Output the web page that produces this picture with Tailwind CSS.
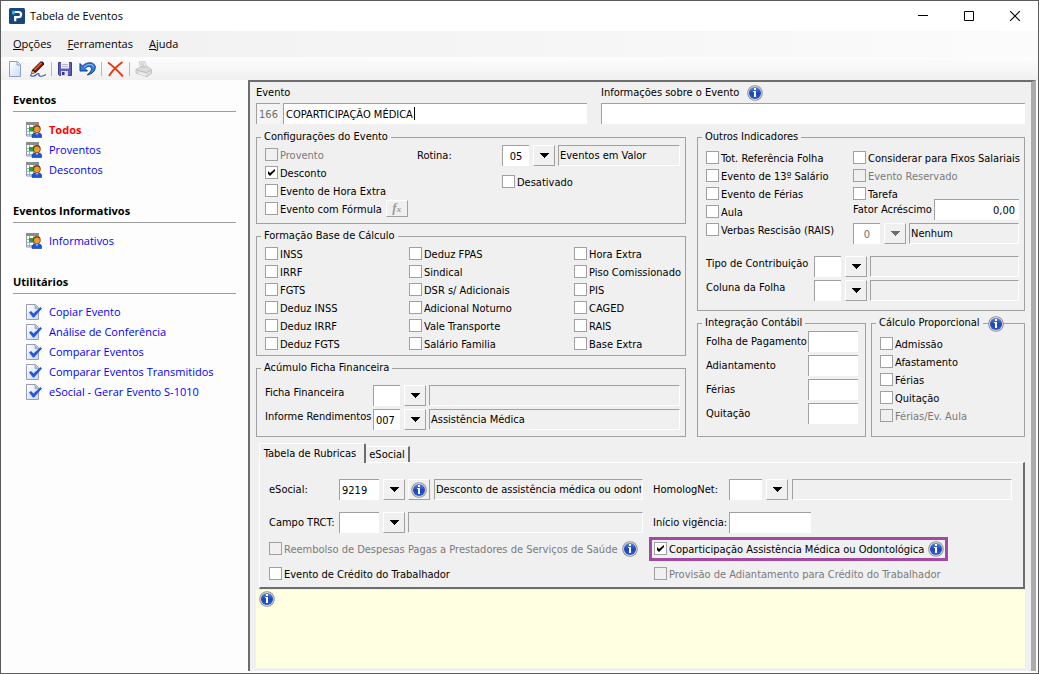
<!DOCTYPE html>
<html lang="pt-BR">
<head>
  <meta charset="UTF-8">
  <meta name="viewport" content="width=device-width, initial-scale=1.0">
  <title>Tabela de Eventos</title>
  <script src="https://cdn.jsdelivr.net/npm/@tailwindcss/browser@4"></script>
</head>
<body class="bg-[#fdfdfd] text-black">

  <!-- Shared icons -->
  <svg class="absolute w-0 h-0" aria-hidden="true">
    <defs>
      <linearGradient id="infoBlue" x1="0" y1="0" x2="0" y2="1">
        <stop offset="0" stop-color="#5f86e6"/>
        <stop offset=".5" stop-color="#1c45b8"/>
        <stop offset="1" stop-color="#2a5cd6"/>
      </linearGradient>
      <linearGradient id="page" x1="0" y1="0" x2="1" y2="1">
        <stop offset="0" stop-color="#ffffff"/>
        <stop offset="1" stop-color="#c9dcf5"/>
      </linearGradient>
    </defs>
    <symbol id="info" viewBox="0 0 16 16">
      <circle cx="8" cy="8" r="7.8" fill="#8c8c8c"/>
      <circle cx="8" cy="8" r="6.9" fill="#d4d4d4"/>
      <circle cx="8" cy="8" r="6" fill="url(#infoBlue)"/>
      <path d="M7 3h2v2H7zM6 6h3v6H7V7H6z" fill="#fff"/>
    </symbol>
    <symbol id="arrow" viewBox="0 0 9 5">
      <path d="M0 0h9v1H8v1H7v1H6v1H5v1H4V4H3V3H2V2H1V1H0z" fill="currentColor"/>
    </symbol>
    <symbol id="tick" viewBox="0 0 7 7">
      <path d="M0 2v3l2 2 5-5V0L2 4z" fill="#000"/>
    </symbol>
    <symbol id="sheet-user" viewBox="0 0 16 16">
      <path d="M.5 1h12v13H.5z" fill="#fff" stroke="#8e9aa5"/>
      <path d="M0 0h13v3H0z" fill="#8c8c8c"/>
      <path d="M1 6.5h12M1 9.5h12M1 12.5h6M3.5 3v11M7.5 3v11" stroke="#8fb3da"/>
      <path d="M3 5h4v4H3z" fill="#27a527"/>
      <path d="M6 15.5c-.5-3 1-4.5 3-4.5h4c2 0 3 1.500 2.700 4.500z" fill="#1d55d8" stroke="#12368f" stroke-width=".6"/>
      <path d="M9.500 11l1.500 2.500 1.500-2.500z" fill="#8fb8ff"/>
      <circle cx="10.800" cy="7" r="3.900" fill="#7a3d0b"/>
      <circle cx="10.900" cy="7.500" r="2.900" fill="#ee9a35"/>
    </symbol>
    <symbol id="sheet-check" viewBox="0 0 16 16">
      <path d="M.5.5h9l3 3v12H.5z" fill="url(#page)" stroke="#9c9cb4"/>
      <path d="M9 1v3.500h3.500" fill="#b5b9c6" stroke="#9c9cb4" stroke-width=".7"/>
      <path d="M3 8.500l2-1.500 2.500 2.500L14.500 3 16 4.500 8 13.500H7z" fill="#2457e0"/>
    </symbol>
  </svg>

  <div class="min-h-screen flex flex-col border border-[#5c5c5e] text-[11px] leading-4 whitespace-nowrap font-['Open_Sans','Noto_Sans',sans-serif]">

    <!-- Title bar -->
    <header class="h-[30px] flex items-center bg-white pl-2">
      <svg class="w-4 h-4" viewBox="0 0 16 16">
        <rect width="16" height="16" rx="1.500" fill="#17467f"/>
        <path d="M5 4h4.500a2.500 2.500 0 0 1 0 5.200H6.200v4" fill="none" stroke="#fff" stroke-width="2.200"/>
        <path d="M3 2.800h3l-.5 4L3 6z" fill="#35b6e8"/>
      </svg>
      <h1 class="ml-[5px]">Tabela de Eventos</h1>
      <div class="ml-auto flex items-center">
        <button aria-label="Minimizar" class="w-[46px] h-[29px] flex items-center justify-center">
          <svg class="w-[10px] h-[10px]" viewBox="0 0 10 10"><path d="M0 4.500h10" stroke="#000"/></svg>
        </button>
        <button aria-label="Maximizar" class="w-[46px] h-[29px] flex items-center justify-center">
          <svg class="w-[10px] h-[10px]" viewBox="0 0 10 10"><path d="M.5.5h9v9h-9z" fill="none" stroke="#000"/></svg>
        </button>
        <button aria-label="Fechar" class="w-[46px] h-[29px] flex items-center justify-center">
          <svg class="w-[10px] h-[10px]" viewBox="0 0 10 10"><path d="M0 0l10 10M10 0L0 10" stroke="#000" stroke-width="1.100"/></svg>
        </button>
      </div>
    </header>

    <!-- Menu -->
    <nav class="h-[26px] flex items-center gap-4 pl-3 bg-linear-to-r from-[#f0f0f0] to-[#fbfbfb]">
      <button><u>O</u>pções</button>
      <button><u>F</u>erramentas</button>
      <button><u>A</u>juda</button>
    </nav>

    <!-- Toolbar -->
    <div class="h-[23px] flex items-center pl-[6px] bg-linear-to-b from-[#fdfdfd] to-[#f0f0f0]">
      <button aria-label="Novo">
        <svg class="w-4 h-4" viewBox="0 0 16 16">
          <path d="M2.500.5h8l3 3v12h-11z" fill="url(#page)" stroke="#8d9fc0"/>
          <path d="M10 .5v3.500h3.500" fill="#e8effa" stroke="#8d9fc0"/>
        </svg>
      </button>
      <button aria-label="Editar" class="ml-[7px]">
        <svg class="w-4 h-4" viewBox="0 0 16 16">
          <path d="M2 9l8.500-8.500h2L14 2v1.500L5.500 12 1 13.500z" fill="#1b0f0c"/>
          <path d="M3.500 8.500L11 1l1.500 1.500-7.500 7.500z" fill="#e2502c"/>
          <path d="M5 10l7.500-7.500.7.700-7.200 7.200z" fill="#8c1c10"/>
          <path d="M2.700 9.500l-1.200 3.500 3.500-1.200z" fill="#f0b368"/>
          <path d="M0 13.500c1 2.500 4.500 2 6 .5s3.500-2 3 0 4 1.500 7-.5" fill="none" stroke="#2d5fa8" stroke-width="1.200"/>
        </svg>
      </button>
      <span class="ml-[5px] w-px h-[14px] bg-[#b9b9b9]"></span>
      <button aria-label="Salvar" class="ml-[5px]">
        <svg class="w-4 h-4" viewBox="0 0 16 16">
          <path d="M1.500 1.500h13v13h-12l-1-1z" fill="#5a5cc4" stroke="#3c3d96"/>
          <path d="M4 1h8v6.500H4z" fill="#f3f3f7"/>
          <path d="M5 3.500h6M5 5.500h6" stroke="#b6b6c6"/>
          <path d="M4 10h7v5H4z" fill="#dfe0ea"/>
          <path d="M5 11h2.500v3H5z" fill="#33347f"/>
        </svg>
      </button>
      <button aria-label="Desfazer" class="ml-[6px]">
        <svg class="w-[17px] h-4" viewBox="0 0 17 16">
          <path d="M1 2.500v7.500h7.500L6 7.500C8 5 11.500 4.800 12.300 7c.7 2-1 4-4 7 5-1.200 8-4.200 8-7.700 0-5-7.800-6.500-12.800-1.300z" fill="#2f7fe0" stroke="#103f94"/>
          <path d="M5 6.300c3.500-3.500 8.500-3.800 9.700-.5" fill="none" stroke="#8cc4ff" stroke-width="1"/>
        </svg>
      </button>
      <span class="ml-[5px] w-px h-[14px] bg-[#b9b9b9]"></span>
      <button aria-label="Excluir" class="ml-[5px]">
        <svg class="w-[17px] h-4" viewBox="0 0 17 16">
          <path d="M1 1.500C6 5 11 10 16 15.500M15.500 1C10 5 5 10 2 15" fill="none" stroke="#e8380d" stroke-width="1.900"/>
        </svg>
      </button>
      <span class="ml-[5px] w-px h-[14px] bg-[#b9b9b9]"></span>
      <button aria-label="Imprimir" disabled class="ml-[5px]">
        <svg class="w-[17px] h-4" viewBox="0 0 17 16">
          <path d="M4 1l6-.5 2 6.500H6z" fill="#ececec" stroke="#cecece"/>
          <path d="M1 8.500l4-2.500h8l3.500 2.500v4L12 15.500 1 12z" fill="#dcdcdc" stroke="#c2c2c2"/>
          <path d="M1.500 9l10 2.500 4.500-2.500M6 3h3M6.500 5h3" fill="none" stroke="#bcbcbc"/>
          <path d="M4 12l7 2" stroke="#f5f5f5" stroke-width="1.500"/>
        </svg>
      </button>
    </div>

    <div class="flex-1 flex">

      <!-- Sidebar -->
      <aside class="w-[247px] shrink-0 pl-3 pr-[12px] pt-3 flex flex-col gap-[23px]">
        <section>
          <h2 class="font-bold pb-[3px] border-b border-[#9c9c9c]">Eventos</h2>
          <ul data-icon="sheet-user" data-links="Todos|Proventos|Descontos" class="mt-2"></ul>
        </section>
        <section>
          <h2 class="font-bold pb-[3px] border-b border-[#9c9c9c]">Eventos Informativos</h2>
          <ul data-icon="sheet-user" data-links="Informativos" class="mt-2"></ul>
        </section>
        <section>
          <h2 class="font-bold pb-[3px] border-b border-[#9c9c9c]">Utilitários</h2>
          <ul data-icon="sheet-check" data-links="Copiar Evento|Análise de Conferência|Comparar Eventos|Comparar Eventos Transmitidos|eSocial - Gerar Evento S-1010" class="mt-2"></ul>
        </section>
      </aside>

      <!-- Form -->
      <main class="flex-1 min-w-0 mr-[2px] mb-[2px] flex flex-col bg-[#f0f0f0] border-l-2 border-t-2 border-[#6d6d6d] border-r-[5px] border-r-[#ababab] pl-[6px] pr-[6px] pb-[3px] font-['DejaVu_Sans_Condensed','Noto_Sans',sans-serif]">

        <div class="flex gap-[14px]">
          <div class="w-[331px] shrink-0">
            <label for="evento" class="h-[21px] flex items-center">Evento</label>
            <div class="flex gap-[3px]">
              <input aria-label="Código do evento" value="166" disabled class="w-[24px] h-[21px] text-center text-[#6d6d6d] bg-[#f5f5f5] border-l border-t border-[#a0a0a0]">
              <span class="flex-1 h-[21px] flex relative">
                <input id="evento" value="COPARTICIPAÇÃO MÉDICA" class="w-full h-[21px] pl-[2px] bg-white border-l border-t border-[#a0a0a0]">
                <span class="absolute left-[131px] top-[4px] w-px h-[13px] bg-black"></span>
              </span>
            </div>
          </div>
          <div class="flex-1">
            <div class="h-[21px] flex items-center gap-2">
              <label for="infoEvento">Informações sobre o Evento</label>
              <svg class="w-4 h-4"><use href="#info"/></svg>
            </div>
            <input id="infoEvento" class="w-full h-[21px] bg-white border-l border-t border-[#a0a0a0]">
          </div>
        </div>

        <div class="mt-[5px] grid grid-cols-[minmax(0,430fr)_minmax(0,328fr)] gap-[11px]">
          <div class="flex flex-col gap-1">

            <fieldset class="min-w-0 border border-[#a0a0a0] pl-2 pr-[5px] pb-[5px] flex">
              <legend class="-ml-1 px-[3px]">Configurações do Evento</legend>
              <div class="w-[152px] pt-px">
                <div data-checks="-Provento|+Desconto|Evento de Hora Extra"></div>
                <div class="flex gap-1">
                  <div data-checks="Evento com Fórmula"></div>
                  <button aria-label="Editar fórmula" disabled class="w-[22px] h-[17px] text-[13px] leading-3 italic font-bold text-[#9a9a9a] border border-white border-r-[#a0a0a0] border-b-[#a0a0a0] font-['Liberation_Serif',serif]">f<span class="text-[9px]">x</span></button>
                </div>
              </div>
              <div class="flex-1 min-w-0">
                <div class="flex">
                  <label for="rotina" class="w-[85px] h-[21px] flex items-center">Rotina:</label>
                  <input id="rotina" value="05" class="w-[27px] h-[21px] text-center bg-white border-l border-t border-[#a0a0a0]">
                  <button aria-label="Escolher rotina" class="ml-1 w-[22px] h-[21px] flex items-center justify-center border border-white border-r-[#a0a0a0] border-b-[#a0a0a0]"><svg class="w-[9px] h-[5px]"><use href="#arrow"/></svg></button>
                  <input aria-label="Descrição da rotina" readonly value="Eventos em Valor" class="ml-[3px] flex-1 min-w-0 h-[21px] pl-px border border-[#a0a0a0] border-r-white border-b-white">
                </div>
                <div data-checks="Desativado" class="ml-[85px] mt-[7px]"></div>
              </div>
            </fieldset>

            <fieldset class="min-w-0 border border-[#a0a0a0] pl-2 pt-px pb-[2px] grid grid-cols-[144px_165px_1fr]">
              <legend class="-ml-1 px-[3px]">Formação Base de Cálculo</legend>
              <div data-checks="INSS|IRRF|FGTS|Deduz INSS|Deduz IRRF|Deduz FGTS"></div>
              <div data-checks="Deduz FPAS|Sindical|DSR s/ Adicionais|Adicional Noturno|Vale Transporte|Salário Familia"></div>
              <div data-checks="Hora Extra|Piso Comissionado|PIS|CAGED|RAIS|Base Extra"></div>
            </fieldset>

            <fieldset class="min-w-0 border border-[#a0a0a0] pl-2 pr-[5px] pt-[9px] pb-[6px]">
              <legend class="-ml-1 px-[3px]">Acúmulo Ficha Financeira</legend>
              <div class="flex">
                <label for="ficha" class="w-[108px]">Ficha Financeira</label>
                <input id="ficha" class="w-[27px] h-[21px] bg-white border-l border-t border-[#a0a0a0]">
                <button aria-label="Escolher ficha" class="ml-1 w-[22px] h-[21px] flex items-center justify-center border border-white border-r-[#a0a0a0] border-b-[#a0a0a0]"><svg class="w-[9px] h-[5px]"><use href="#arrow"/></svg></button>
                <input aria-label="Descrição da ficha" readonly class="ml-[3px] flex-1 min-w-0 h-[21px] border border-[#a0a0a0] border-r-white border-b-white">
              </div>
              <div class="mt-[3px] flex">
                <label for="informe" class="w-[108px]">Informe Rendimentos</label>
                <input id="informe" value="007" class="w-[27px] h-[21px] pl-[2px] bg-white border-l border-t border-[#a0a0a0]">
                <button aria-label="Escolher informe" class="ml-1 w-[22px] h-[21px] flex items-center justify-center border border-white border-r-[#a0a0a0] border-b-[#a0a0a0]"><svg class="w-[9px] h-[5px]"><use href="#arrow"/></svg></button>
                <input aria-label="Descrição do informe" readonly value="Assistência Médica" class="ml-[3px] flex-1 min-w-0 h-[21px] pl-px border border-[#a0a0a0] border-r-white border-b-white">
              </div>
            </fieldset>
          </div>

          <div class="flex flex-col gap-1">
            <fieldset class="min-w-0 border border-[#a0a0a0] pl-2 pr-[5px] pt-1 pb-[9px]">
              <legend class="-ml-1 px-[3px]">Outros Indicadores</legend>
              <div class="grid grid-cols-[147px_minmax(0,1fr)]">
                <div data-checks="Tot. Referência Folha|Evento de 13º Salário|Evento de Férias|Aula|Verbas Rescisão (RAIS)"></div>
                <div>
                  <div data-checks="Considerar para Fixos Salariais|-Evento Reservado|Tarefa"></div>
                  <div class="-mt-1 flex items-center justify-between">
                    <label for="fator">Fator Acréscimo</label>
                    <input id="fator" value="0,00" class="w-[85px] h-[21px] pr-1 text-right bg-white border-l border-t border-[#a0a0a0]">
                  </div>
                  <div class="mt-[3px] flex">
                    <input aria-label="Código do fator" value="0" disabled class="w-[27px] h-[21px] text-center text-[#6d6d6d] bg-white border-l border-t border-[#a0a0a0]">
                    <button aria-label="Escolher fator" disabled class="ml-1 w-[22px] h-[21px] flex items-center justify-center text-[#6d6d6d] border border-white border-r-[#a0a0a0] border-b-[#a0a0a0]"><svg class="w-[9px] h-[5px]"><use href="#arrow"/></svg></button>
                    <input aria-label="Descrição do fator" readonly value="Nenhum" class="ml-[3px] flex-1 min-w-0 h-[21px] pl-px border border-[#a0a0a0] border-r-white border-b-white">
                  </div>
                </div>
              </div>
              <div class="mt-3 flex">
                <label for="tipo" class="w-[108px]">Tipo de Contribuição</label>
                <input id="tipo" class="w-[27px] h-[21px] bg-white border-l border-t border-[#a0a0a0]">
                <button aria-label="Escolher tipo" class="ml-1 w-[22px] h-[21px] flex items-center justify-center border border-white border-r-[#a0a0a0] border-b-[#a0a0a0]"><svg class="w-[9px] h-[5px]"><use href="#arrow"/></svg></button>
                <input aria-label="Descrição do tipo" readonly class="ml-[3px] flex-1 min-w-0 h-[21px] border border-[#a0a0a0] border-r-white border-b-white">
              </div>
              <div class="mt-[3px] flex">
                <label for="coluna" class="w-[108px]">Coluna da Folha</label>
                <input id="coluna" class="w-[27px] h-[21px] bg-white border-l border-t border-[#a0a0a0]">
                <button aria-label="Escolher coluna" class="ml-1 w-[22px] h-[21px] flex items-center justify-center border border-white border-r-[#a0a0a0] border-b-[#a0a0a0]"><svg class="w-[9px] h-[5px]"><use href="#arrow"/></svg></button>
                <input aria-label="Descrição da coluna" readonly class="ml-[3px] flex-1 min-w-0 h-[21px] border border-[#a0a0a0] border-r-white border-b-white">
              </div>
            </fieldset>

            <div class="flex-1 grid grid-cols-[minmax(0,169fr)_minmax(0,154fr)] gap-[5px]">
              <fieldset class="min-w-0 border border-[#a0a0a0] pl-2 pr-[7px] flex flex-col gap-[3px]">
                <legend class="-ml-1 px-[3px]">Integração Contábil</legend>
                <div class="flex items-center justify-between">
                  <label for="folha">Folha de Pagamento</label>
                  <input id="folha" class="w-[50px] h-[21px] bg-white border-l border-t border-[#a0a0a0]">
                </div>
                <div class="flex items-center justify-between">
                  <label for="adiantamento">Adiantamento</label>
                  <input id="adiantamento" class="w-[50px] h-[21px] bg-white border-l border-t border-[#a0a0a0]">
                </div>
                <div class="flex items-center justify-between">
                  <label for="ferias">Férias</label>
                  <input id="ferias" class="w-[50px] h-[21px] bg-white border-l border-t border-[#a0a0a0]">
                </div>
                <div class="flex items-center justify-between">
                  <label for="quitacao">Quitação</label>
                  <input id="quitacao" class="w-[50px] h-[21px] bg-white border-l border-t border-[#a0a0a0]">
                </div>
              </fieldset>
              <div class="relative flex">
                <fieldset class="flex-1 min-w-0 border border-[#a0a0a0] pl-2 pt-1">
                  <legend class="-ml-1 px-[3px]">Cálculo Proporcional</legend>
                  <div data-checks="Admissão|Afastamento|Férias|Quitação|-Férias/Ev. Aula"></div>
                </fieldset>
                <svg class="absolute right-[21px] top-px w-4 h-4"><use href="#info"/></svg>
              </div>
            </div>
          </div>
        </div>

        <!-- Tabs -->
        <div class="mt-[6px] ml-[3px]">
          <div role="tablist" class="h-[19px] flex items-end">
            <button role="tab" aria-selected="true" class="relative -mb-px w-[107px] h-[20px] pr-1 border-l border-t border-white border-r-2 border-r-[#6d6d6d] rounded-t-[2px] bg-[#f0f0f0]">Tabela de Rubricas</button>
            <button role="tab" aria-selected="false" class="w-[44px] h-[16px] border-t border-white border-r-2 border-r-[#6d6d6d]">eSocial</button>
          </div>
          <div role="tabpanel" class="border-l border-t border-white border-r-2 border-r-[#6d6d6d] border-b-2 border-b-[#6d6d6d] pl-[9px] pr-[11px] pt-4 pb-1">
            <div class="grid grid-cols-[384px_1fr] gap-y-3">
              <div class="flex items-center">
                <label for="esocial" class="w-[70px]">eSocial:</label>
                <input id="esocial" value="9219" class="w-[40px] h-[21px] pl-[2px] bg-white border-l border-t border-[#a0a0a0]">
                <button aria-label="Escolher eSocial" class="ml-1 w-[22px] h-[21px] flex items-center justify-center border border-white border-r-[#a0a0a0] border-b-[#a0a0a0]"><svg class="w-[9px] h-[5px]"><use href="#arrow"/></svg></button>
                <button aria-label="Sobre eSocial" class="ml-[3px] w-[22px] h-[21px] flex items-center justify-center border border-white border-r-[#a0a0a0] border-b-[#a0a0a0]"><svg class="w-4 h-4"><use href="#info"/></svg></button>
                <input aria-label="Descrição eSocial" readonly value="Desconto de assistência médica ou odontológica" class="ml-1 mr-[10px] flex-1 min-w-0 h-[21px] px-px border border-[#a0a0a0] border-r-white border-b-white">
              </div>
              <div class="flex items-center">
                <label for="homolog" class="w-[76px]">HomologNet:</label>
                <input id="homolog" class="w-[33px] h-[21px] bg-white border-l border-t border-[#a0a0a0]">
                <button aria-label="Escolher HomologNet" class="ml-1 w-[22px] h-[21px] flex items-center justify-center border border-white border-r-[#a0a0a0] border-b-[#a0a0a0]"><svg class="w-[9px] h-[5px]"><use href="#arrow"/></svg></button>
                <input aria-label="Descrição HomologNet" readonly class="ml-1 flex-1 min-w-0 h-[21px] border border-[#a0a0a0] border-r-white border-b-white">
              </div>
              <div class="flex items-center">
                <label for="trct" class="w-[70px]">Campo TRCT:</label>
                <input id="trct" class="w-[40px] h-[21px] bg-white border-l border-t border-[#a0a0a0]">
                <button aria-label="Escolher TRCT" class="ml-1 w-[22px] h-[21px] flex items-center justify-center border border-white border-r-[#a0a0a0] border-b-[#a0a0a0]"><svg class="w-[9px] h-[5px]"><use href="#arrow"/></svg></button>
                <input aria-label="Descrição TRCT" readonly class="ml-[3px] mr-[10px] flex-1 min-w-0 h-[21px] border border-[#a0a0a0] border-r-white border-b-white">
              </div>
              <div class="flex items-center">
                <label for="vigencia" class="w-[76px]">Início vigência:</label>
                <input id="vigencia" class="w-[82px] h-[21px] bg-white border-l border-t border-[#a0a0a0]">
              </div>
            </div>
            <div class="mt-1 grid grid-cols-[384px_1fr] gap-y-1">
              <div class="flex items-center gap-1">
                <div data-checks="-Reembolso de Despesas Pagas a Prestadores de Serviços de Saúde"></div>
                <svg class="w-4 h-4"><use href="#info"/></svg>
              </div>
              <div class="-ml-1 justify-self-start h-[24px] flex items-center gap-1 border-[3px] border-[#a349a4] pl-[2px] pr-px">
                <div data-checks="+Coparticipação Assistência Médica ou Odontológica"></div>
                <svg class="w-4 h-4"><use href="#info"/></svg>
              </div>
              <div data-checks="Evento de Crédito do Trabalhador"></div>
              <div data-checks="-Provisão de Adiantamento para Crédito do Trabalhador" class="ml-px"></div>
            </div>
          </div>
        </div>

        <div class="mt-px flex-1 min-h-[78px] bg-[#ffffe1] pl-[3px] pt-px">
          <svg class="w-4 h-4"><use href="#info"/></svg>
        </div>
      </main>
    </div>
  </div>

  <script>
    // "-" marks a disabled option, "+" a checked one
    let id = 0;
    document.querySelectorAll('[data-checks]').forEach(box => {
      box.innerHTML = box.dataset.checks.split('|').map(item => {
        const off = item[0] === '-';
        const on = item[0] === '+';
        const text = off || on ? item.slice(1) : item;
        id++;
        return `
          <div class="relative h-[18px] pt-[2px] flex items-start gap-[2px]">
            <input type="checkbox" id="opt${id}" ${on ? 'checked' : ''} ${off ? 'disabled' : ''} class="peer appearance-none shrink-0 w-[13px] h-[13px] border border-[#a0a0a0] bg-white disabled:bg-[#f0f0f0]">
            <svg class="hidden peer-checked:block pointer-events-none absolute left-[3px] top-[5px] w-[7px] h-[7px]"><use href="#tick"/></svg>
            <label for="opt${id}" class="peer-disabled:text-[#7a7a7a]">${text}</label>
          </div>`;
      }).join('');
    });

    document.querySelectorAll('[data-links]').forEach(list => {
      list.innerHTML = list.dataset.links.split('|').map(text => `
        <li class="h-5 flex items-center gap-[7px] pl-[13px]">
          <svg class="w-4 h-4"><use href="#${list.dataset.icon}"/></svg>
          <a href="#" class="${text === 'Todos' ? 'font-bold text-[#ff0000]' : 'text-[#0000ff]'}">${text}</a>
        </li>`).join('');
    });
  </script>
</body>
</html>
